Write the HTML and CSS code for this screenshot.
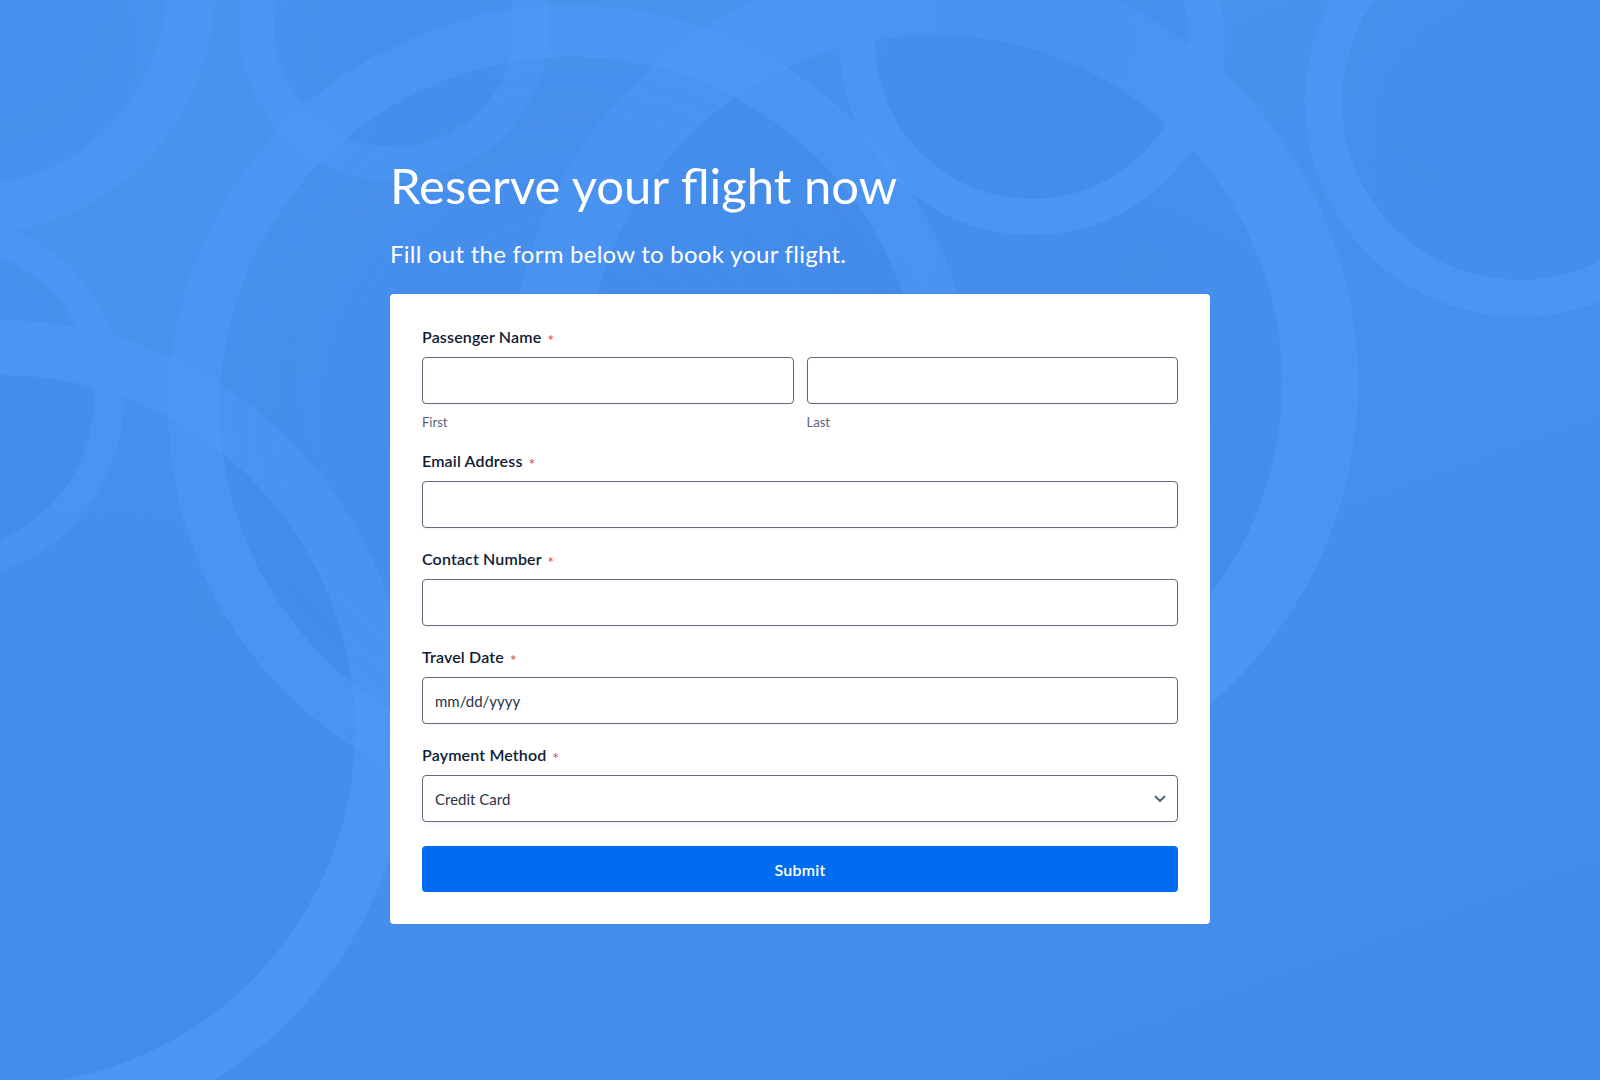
FILE: index.html
```html
<!DOCTYPE html>
<html lang="en">
<head>
<meta charset="utf-8">
<title>Reserve your flight now</title>
<link rel="stylesheet" href="styles.css">
</head>
<body>
<div class="bg" aria-hidden="true">
  <div class="ring r-a"></div>
  <div class="ring r-b"></div>
  <div class="ring r-c"></div>
  <div class="ring r-d"></div>
  <div class="ring r-e"></div>
  <div class="ring r-f"></div>
  <div class="ring r-g"></div>
  <div class="ring r-h"></div>
</div>
<main class="page">
  <header class="intro">
    <h1 class="title">Reserve your flight now</h1>
    <p class="subtitle">Fill out the form below to book your flight.</p>
  </header>
  <form class="card">
    <div class="field">
      <label class="label">Passenger Name <span class="req">*</span></label>
      <div class="name-row">
        <div class="name-col">
          <input class="input" type="text">
          <span class="sublabel">First</span>
        </div>
        <div class="name-col">
          <input class="input" type="text">
          <span class="sublabel">Last</span>
        </div>
      </div>
    </div>
    <div class="field">
      <label class="label">Email Address <span class="req">*</span></label>
      <input class="input" type="email">
    </div>
    <div class="field">
      <label class="label">Contact Number <span class="req">*</span></label>
      <input class="input" type="tel">
    </div>
    <div class="field">
      <label class="label">Travel Date <span class="req">*</span></label>
      <input class="input date" type="text" placeholder="mm/dd/yyyy">
    </div>
    <div class="field">
      <label class="label">Payment Method <span class="req">*</span></label>
      <div class="select-wrap">
        <select class="input select">
          <option>Credit Card</option>
          <option>Debit Card</option>
          <option>PayPal</option>
        </select>
        <svg class="chevron" width="12" height="8" viewBox="0 0 12 8"><path d="M1.5 1.5 L6 6 L10.5 1.5" fill="none" stroke="#57647e" stroke-width="2" stroke-linecap="round" stroke-linejoin="round"/></svg>
      </div>
    </div>
    <button class="submit" type="button">Submit</button>
  </form>
</main>
</body>
</html>
```

FILE: styles.css
```css
* { box-sizing: border-box; }

html, body {
  margin: 0;
  padding: 0;
  height: 100%;
}

body {
  background: #468fec;
  font-family: "Lato", "Noto Sans", sans-serif;
  overflow: hidden;
  position: relative;
  min-height: 1080px;
}

.bg {
  position: absolute;
  inset: 0;
  overflow: hidden;
  z-index: 0;
  background: linear-gradient(160deg, #4a93ef 0%, #468fec 55%, #438be9 100%);
}

.ring {
  position: absolute;
  border-radius: 50%;
  border-style: solid;
  border-color: #4c96f3;
  background: radial-gradient(circle at 50% 50%, rgba(40, 110, 215, 0.10) 0%, rgba(40, 110, 215, 0.04) 70%, rgba(40, 110, 215, 0) 100%);
}

/* big central ring */
.r-a { left: 510px; top: -41px; width: 848px; height: 848px; border-width: 76px; }
/* top center small ring */
.r-b { left: 239px; top: -128px; width: 310px; height: 310px; border-width: 35px; }
/* top-left corner ring */
.r-c { left: -275px; top: -255px; width: 490px; height: 490px; border-width: 50px; }
/* left middle ring */
.r-d { left: -244px; top: 214px; width: 368px; height: 368px; border-width: 30px; }
/* bottom-left large ring */
.r-e { left: -410px; top: 320px; width: 820px; height: 820px; border-width: 55px; }
/* top-right ring */
.r-f { left: 1305px; top: -113px; width: 430px; height: 430px; border-width: 37px; }
/* top center-right ring */
.r-g { left: 839px; top: -151px; width: 386px; height: 386px; border-width: 36px; }
/* left large ring behind card */
.r-h { left: 168px; top: 5px; width: 806px; height: 806px; border-width: 52px; border-color: rgba(80, 155, 248, 0.55); }

.page {
  position: relative;
  z-index: 1;
  width: 820px;
  margin: 0 auto;
  padding-top: 156px;
}

.intro {
  color: #ffffff;
}

.title {
  margin: 0;
  font-size: 49px;
  line-height: 58px;
  font-weight: 400;
  letter-spacing: 0;
}

.subtitle {
  margin: 24px 0 0;
  font-size: 24px;
  line-height: 31px;
  font-weight: 400;
  letter-spacing: 0.25px;
}

.card {
  margin-top: 25px;
  background: #ffffff;
  border-radius: 4px;
  padding: 33px 32px 32px;
  display: flex;
  flex-direction: column;
  gap: 21px;
}

.field {
  display: flex;
  flex-direction: column;
  gap: 10px;
}

.label {
  display: block;
  height: 20px;
  font-size: 16px;
  line-height: 20px;
  font-weight: 600;
  color: #0f1c35;
  letter-spacing: 0.15px;
}

.req {
  color: #e8392f;
  font-size: 15px;
  line-height: 0;
  font-weight: 400;
  margin-left: 2px;
  vertical-align: -3px;
}

.name-row {
  display: grid;
  grid-template-columns: 1fr 1fr;
  gap: 13px;
}

.name-col {
  display: flex;
  flex-direction: column;
  gap: 10px;
}

.sublabel {
  font-size: 13px;
  line-height: 16px;
  color: #5b6270;
}

.input {
  display: block;
  width: 100%;
  height: 47px;
  border: 1px solid #5f6878;
  border-radius: 4px;
  background: #ffffff;
  padding: 0 12px;
  font-family: "Lato", "Noto Sans", sans-serif;
  font-size: 15px;
  color: #2c3345;
  box-shadow: 0 2px 3px rgba(86, 70, 150, 0.06);
  outline: none;
}

.date::placeholder {
  color: #2c3345;
  opacity: 1;
}

.select-wrap {
  position: relative;
}

.select {
  appearance: none;
  -webkit-appearance: none;
  padding-right: 40px;
}

.chevron {
  position: absolute;
  right: 12px;
  top: 20px;
  pointer-events: none;
}

.submit {
  margin-top: 3px;
  height: 46px;
  width: 100%;
  border: none;
  border-radius: 4px;
  background: #006cf1;
  color: #ffffff;
  font-family: "Lato", "Noto Sans", sans-serif;
  font-size: 16px;
  font-weight: 600;
  letter-spacing: 0.2px;
  cursor: pointer;
}
```
